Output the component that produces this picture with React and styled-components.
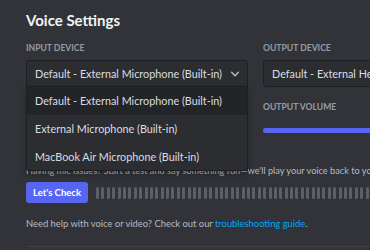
import React from "react";
import styled, { createGlobalStyle } from "styled-components";

const GlobalStyle = createGlobalStyle`
  html, body { margin: 0; padding: 0; background: #313338; }
  body { font-family: Lato, "Noto Sans", sans-serif; -webkit-font-smoothing: antialiased; }
  * { box-sizing: border-box; }
`;

const Page = styled.div`
  width: 370px;
  height: 250px;
  overflow: hidden;
  background: #313338;
  padding: 11px 0 0 26px;
`;

const Title = styled.h1`
  margin: 0;
  font-size: 15px;
  line-height: 18px;
  font-weight: 700;
  color: #f2f3f5;
`;

const Columns = styled.div`
  display: flex;
  gap: 15px;
  margin-top: 13.5px;
  width: 600px;
`;

const Column = styled.div`
  width: 222px;
  flex: none;
  display: flex;
  flex-direction: column;
`;

const Label = styled.div`
  font-size: 8.6px;
  line-height: 11px;
  font-weight: 700;
  text-transform: uppercase;
  color: #949ba4;
  margin-top: ${(p) => p.$mt || 0}px;
`;

const SelectWrap = styled.div`
  position: relative;
  margin-top: 6.5px;
`;

const Select = styled.div`
  height: 27px;
  display: flex;
  align-items: center;
  justify-content: space-between;
  padding: 0 8px;
  background: #2b2d31;
  border: 1px solid #1e1f22;
  border-radius: ${(p) => (p.$open ? "3px 3px 0 0" : "3px")};
  font-size: 10.8px;
  color: #dbdee1;
  white-space: nowrap;
  overflow: hidden;
`;

const Chevron = styled.svg`
  width: 8px;
  height: 6px;
  flex: none;
  color: #b5bac1;
`;

const Dropdown = styled.div`
  position: absolute;
  left: 0;
  right: 0;
  top: 100%;
  background: #2b2d31;
  border: 1px solid #1e1f22;
  border-top: none;
  border-radius: 0 0 3px 3px;
  box-shadow: 0 4px 8px rgba(0, 0, 0, 0.25);
  z-index: 2;
`;

const Option = styled.div`
  height: 27.7px;
  display: flex;
  align-items: center;
  padding: 0 8px;
  font-size: 10.8px;
  color: #dbdee1;
  white-space: nowrap;
  background: ${(p) => (p.$active ? "#232428" : "transparent")};
`;

const Slider = styled.div`
  margin-top: 15.5px;
  height: 4.5px;
  border-radius: 3px;
  background: #5865f2;
`;

const Help = styled.p`
  margin: ${(p) => p.$m || "0"};
  font-size: ${(p) => p.$size || 9.2}px;
  line-height: 12px;
  color: #b5bac1;
  white-space: nowrap;
`;

const Link = styled.a`
  color: #00a8fc;
  text-decoration: none;
`;

const TestRow = styled.div`
  display: flex;
  align-items: center;
  gap: 8px;
  margin-top: 5.5px;
`;

const Button = styled.button`
  width: 62px;
  height: 21px;
  flex: none;
  border: none;
  border-radius: 3px;
  background: #5865f2;
  color: #fff;
  font-family: inherit;
  font-size: 9.5px;
  font-weight: 700;
  padding: 0;
  display: flex;
  align-items: center;
  justify-content: center;
`;

const Bars = styled.div`
  display: flex;
  gap: 2.4px;
  overflow: hidden;
  flex: 1;
  margin-top: 1px;
`;

const Bar = styled.span`
  width: 3px;
  height: 12px;
  flex: none;
  border-radius: 1.5px;
  background: #5c5f66;
`;

const Divider = styled.div`
  height: 1px;
  background: #3f4147;
  margin-top: 16px;
`;

const options = [
  "Default - External Microphone (Built-in)",
  "External Microphone (Built-in)",
  "MacBook Air Microphone (Built-in)",
];

export default function App() {
  return (
    <>
      <GlobalStyle />
      <Page>
        <Title>Voice Settings</Title>
        <Columns>
          <Column>
            <Label>Input Device</Label>
            <SelectWrap>
              <Select $open>
                <span>Default - External Microphone (Built-in)</span>
                <Chevron viewBox="6 9 12 7" fill="none">
                  <path d="M7 10l5 5 5-5" stroke="currentColor" strokeWidth="2.2" strokeLinecap="round" strokeLinejoin="round" />
                </Chevron>
              </Select>
              <Dropdown>
                {options.map((o, i) => (
                  <Option key={o} $active={i === 0}>{o}</Option>
                ))}
              </Dropdown>
            </SelectWrap>
          </Column>
          <Column>
            <Label>Output Device</Label>
            <SelectWrap>
              <Select>
                <span>Default - External Headphones (Built-in)</span>
              </Select>
            </SelectWrap>
            <Label $mt={14.5}>Output Volume</Label>
            <Slider />
          </Column>
        </Columns>
        <Help $m="32px 0 0 0" $size={9.2}>
          Having mic issues? Start a test and say something fun—we'll play your voice back to you.
        </Help>
        <TestRow>
          <Button>Let's Check</Button>
          <Bars>
            {Array.from({ length: 60 }).map((_, i) => (
              <Bar key={i} />
            ))}
          </Bars>
        </TestRow>
        <Help $m="15px 0 0 0" $size={9.4}>
          Need help with voice or video? Check out our <Link>troubleshooting guide</Link>.
        </Help>
        <Divider />
      </Page>
    </>
  );
}
